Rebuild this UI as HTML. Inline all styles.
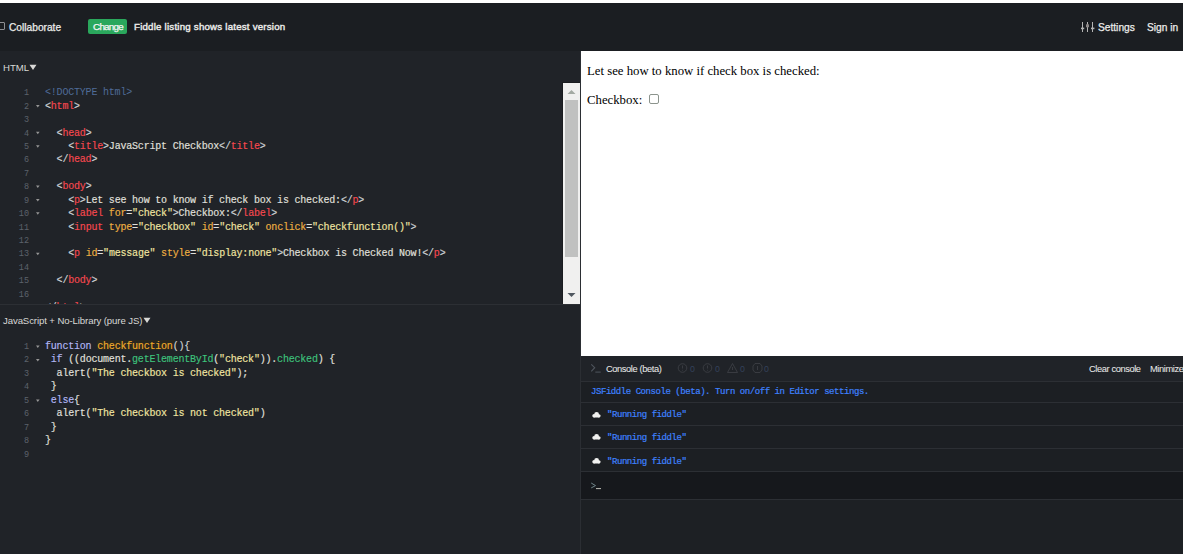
<!DOCTYPE html>
<html><head><meta charset="utf-8">
<style>
*{margin:0;padding:0;box-sizing:border-box}
html,body{width:1183px;height:554px;overflow:hidden;background:#1b1e22;font-family:"Liberation Sans",sans-serif}
.a{position:absolute}
#topw{left:0;top:0;width:1183px;height:3px;background:#fff}
#topd{left:0;top:3px;width:1183px;height:1px;background:#1b1e22}
#hdr{left:0;top:4px;width:1183px;height:47px;background:#1b1e22}
.ht{color:#ececea;font-size:10px;line-height:12px;white-space:pre;-webkit-text-stroke:0.25px currentColor}
#left{left:0;top:51px;width:580px;height:503px;background:#202328}
#split{left:580px;top:51px;width:1px;height:503px;background:#2b2e33}
#prev{left:581px;top:51px;width:602px;height:305px;background:#fff}
#cons{left:581px;top:356px;width:602px;height:198px;background:#1d2024}
.code{font-family:"Liberation Mono",monospace;font-size:10px;letter-spacing:-0.2px;white-space:pre;line-height:13.43px;color:#e0e0de;-webkit-text-stroke:0.15px currentColor}
.ln{font-family:"Liberation Mono",monospace;font-size:8.5px;color:#5c626b;text-align:right;width:29px;line-height:13.43px;white-space:pre}
.fd{color:#8b8d90;font-size:7px;line-height:13.43px}
.tg{color:#f7484f}
.br{color:#cfd3d6}
.at{color:#efb042}
.st{color:#f2e6a2}
.dt{color:#4f6b98;-webkit-text-stroke:0}
.kw{color:#b3b8f6}
.fn{color:#f0ad2a}
.pr{color:#3ec27c}
.js{color:#d8d8d6}
.sep{height:1px;background:#2c2f34}
.cl{font-family:"Liberation Mono",monospace;font-size:9px;letter-spacing:-0.44px;color:#3f82ff;white-space:pre;-webkit-text-stroke:0.2px currentColor}
</style></head><body>
<div class="a" id="topw"></div>
<div class="a" id="topd"></div>
<div class="a" id="hdr">
  <div class="a" style="left:-4px;top:18px;width:9px;height:8px;border:1px solid #8e9094;border-radius:1px"></div>
  <div class="a ht" style="left:9px;top:17.8px;font-size:10.2px">Collaborate</div>
  <div class="a" style="left:88px;top:15px;width:39px;height:15px;background:#2aa75c;border-radius:2px"></div>
  <div class="a ht" style="left:93px;top:16.5px;font-size:9.8px;letter-spacing:-0.7px;color:#f6f6f6">Change</div>
  <div class="a ht" style="left:134px;top:16.5px;font-size:9.7px;letter-spacing:0.22px;-webkit-text-stroke:0.4px currentColor">Fiddle listing shows latest version</div>
  <svg class="a" style="left:1081px;top:18px" width="14" height="10" viewBox="0 0 14 10">
    <g fill="#b4b4b4"><rect x="1" y="0" width="1" height="10"/><rect x="6" y="0" width="1" height="10"/><rect x="11" y="0" width="1" height="10"/>
    <rect x="-0.2" y="5.6" width="3.4" height="1.6"/><rect x="10" y="5.6" width="3.4" height="1.6"/></g>
    <rect x="5" y="2" width="3" height="3.4" rx="1.2" fill="#8f8a8a"/>
  </svg>
  <div class="a ht" style="left:1098px;top:17.8px;font-size:10.2px">Settings</div>
  <div class="a ht" style="left:1147px;top:17.8px;font-size:10.2px">Sign in</div>
</div>

<div class="a" id="left">
  <div class="a ht" style="left:3px;top:11px;font-size:9.6px;color:#d8d8d6;-webkit-text-stroke:0">HTML</div><svg class="a" style="left:29px;top:13px" width="9" height="7"><polygon points="0.5,0.8 7.5,0.8 4,6" fill="#d8d8d6"/></svg>
  <!-- html line numbers -->
  <div class="a ln" style="left:0;top:36.2px">1
2
3
4
5
6
7
8
9
10
11
12
13
14
15
16
17</div>
  
  <div class="a code" style="left:45px;top:35.2px"><span class="dt">&lt;!DOCTYPE html&gt;</span>
<span class="br">&lt;</span><span class="tg">html</span><span class="br">&gt;</span>

  <span class="br">&lt;</span><span class="tg">head</span><span class="br">&gt;</span>
    <span class="br">&lt;</span><span class="tg">title</span><span class="br">&gt;</span>JavaScript Checkbox<span class="br">&lt;/</span><span class="tg">title</span><span class="br">&gt;</span>
  <span class="br">&lt;/</span><span class="tg">head</span><span class="br">&gt;</span>

  <span class="br">&lt;</span><span class="tg">body</span><span class="br">&gt;</span>
    <span class="br">&lt;</span><span class="tg">p</span><span class="br">&gt;</span>Let see how to know if check box is checked:<span class="br">&lt;/</span><span class="tg">p</span><span class="br">&gt;</span>
    <span class="br">&lt;</span><span class="tg">label</span> <span class="at">for</span>=<span class="st">"check"</span><span class="br">&gt;</span>Checkbox:<span class="br">&lt;/</span><span class="tg">label</span><span class="br">&gt;</span>
    <span class="br">&lt;</span><span class="tg">input</span> <span class="at">type</span>=<span class="st">"checkbox"</span> <span class="at">id</span>=<span class="st">"check"</span> <span class="at">onclick</span>=<span class="st">"checkfunction()"</span><span class="br">&gt;</span>

    <span class="br">&lt;</span><span class="tg">p</span> <span class="at">id</span>=<span class="st">"message"</span> <span class="at">style</span>=<span class="st">"display:none"</span><span class="br">&gt;</span>Checkbox is Checked Now!<span class="br">&lt;/</span><span class="tg">p</span><span class="br">&gt;</span>

  <span class="br">&lt;/</span><span class="tg">body</span><span class="br">&gt;</span>

<span class="br">&lt;/</span><span class="tg">html</span><span class="br">&gt;</span></div>
  <!-- cover below html editor -->
  <div class="a" style="left:0;top:253px;width:580px;height:250px;background:#202328"></div>
  <div class="a sep" style="left:0;top:253px;width:580px"></div>
  <!-- scrollbar -->
  <div class="a" style="left:562px;top:31px;width:18px;height:222px;background:#1a1c1f"></div>
  <div class="a" style="left:563px;top:32px;width:17px;height:221px;background:#f0f0ef"></div>
  <div class="a" style="left:565px;top:49px;width:13px;height:157px;background:#c0c1c0"></div>
  <svg class="a" style="left:567px;top:38px" width="9" height="6"><polygon points="0.5,5 4.5,1 8.5,5" fill="#a3aaa3"/></svg>
  <svg class="a" style="left:567px;top:241px" width="9" height="6"><polygon points="0.5,1 4.5,5 8.5,1" fill="#505860"/></svg>

  <div class="a ht" style="left:3px;top:264px;font-size:9.6px;letter-spacing:-0.1px;color:#d8d8d6;-webkit-text-stroke:0">JavaScript + No-Library (pure JS)</div><svg class="a" style="left:143px;top:266px" width="9" height="7"><polygon points="0.5,0.8 7.5,0.8 4,6" fill="#d8d8d6"/></svg>
  <div class="a ln" style="left:0;top:289.8px;line-height:13.5px">1
2
3
4
5
6
7
8
9</div>
  
  <div class="a" style="left:97px;top:289.2px;width:79px;height:9.6px;background:#29281f"></div>
  <div class="a code" style="left:45px;top:288.8px;line-height:13.5px"><span class="kw">function</span> <span class="fn">checkfunction</span><span class="br">(){</span>
 <span class="kw">if</span> ((document.<span class="pr">getElementById</span>(<span class="st">"check"</span>)).<span class="pr">checked</span>) {
  alert(<span class="st">"The checkbox is checked"</span>);
 }
 <span class="kw">else</span>{
  alert(<span class="st">"The checkbox is not checked"</span>)
 }
}
</div>
<svg class="a" style="left:0;top:0" width="45" height="503" fill="#969696"><polygon points="36,53.93 39.6,53.93 37.8,56.43"/><polygon points="36,80.79 39.6,80.79 37.8,83.29"/><polygon points="36,94.22 39.6,94.22 37.8,96.72"/><polygon points="36,134.51 39.6,134.51 37.8,137.01"/><polygon points="36,147.94 39.6,147.94 37.8,150.44"/><polygon points="36,161.37 39.6,161.37 37.8,163.87"/><polygon points="36,201.66 39.6,201.66 37.8,204.16"/><polygon points="36,294.50 39.6,294.50 37.8,297.00"/><polygon points="36,308.00 39.6,308.00 37.8,310.50"/><polygon points="36,348.50 39.6,348.50 37.8,351.00"/></svg>
</div>
<div class="a" id="split"></div>
<div class="a" id="prev">
  <div class="a" style="left:6px;top:12.5px;font-family:'Liberation Serif',serif;font-size:12.75px;color:#000;white-space:pre">Let see how to know if check box is checked:</div>
  <div class="a" style="left:6px;top:42px;font-family:'Liberation Serif',serif;font-size:12.75px;color:#000;white-space:pre">Checkbox:</div>
  <div class="a" style="left:68px;top:43px;width:10px;height:10px;border:1px solid #8c948d;border-radius:2px;background:#fff"></div>
</div>
<div class="a" id="cons">
  <div class="a" style="left:0;top:0;width:602px;height:25px;background:#202328"></div>
  <div class="a sep" style="left:0;top:25px;width:602px"></div>
  <div class="a" style="left:0;top:26px;width:602px;height:20px;background:#1c1f23"></div>
  <div class="a sep" style="left:0;top:46px;width:602px"></div>
  <div class="a" style="left:0;top:47px;width:602px;height:22px;background:#1c1f23"></div>
  <div class="a sep" style="left:0;top:69px;width:602px"></div>
  <div class="a" style="left:0;top:70px;width:602px;height:22px;background:#1c1f23"></div>
  <div class="a sep" style="left:0;top:92px;width:602px"></div>
  <div class="a" style="left:0;top:93px;width:602px;height:22px;background:#1c1f23"></div>
  <div class="a sep" style="left:0;top:115px;width:602px"></div>
  <div class="a" style="left:0;top:116px;width:602px;height:27px;background:#16181c"></div>
  <div class="a sep" style="left:0;top:143px;width:602px"></div>

  <svg class="a" style="left:0;top:0" width="30" height="25"><polyline points="10.3,8.3 13.7,11.7 10.3,15.4" fill="none" stroke="#4f555d" stroke-width="1.1"/><rect x="14.3" y="15.6" width="5.4" height="1" fill="#4f555d"/></svg>
  <div class="a ht" style="left:25px;top:7px;font-size:9.3px;letter-spacing:-0.4px;color:#e6e6e6;-webkit-text-stroke:0.05px currentColor">Console (beta)</div>
  <svg class="a" style="left:96px;top:6px" width="95" height="12" viewBox="0 0 95 12" fill="none" stroke="#3d4046" stroke-width="0.85">
    <circle cx="5.5" cy="6" r="4.3"/><line x1="5.5" y1="3.5" x2="5.5" y2="6.5"/><line x1="5.5" y1="7.8" x2="5.5" y2="8.6"/>
    <circle cx="30.5" cy="6" r="4.3"/><line x1="30.5" y1="3.5" x2="30.5" y2="6.5"/><line x1="30.5" y1="7.8" x2="30.5" y2="8.6"/>
    <polygon points="55.5,1.5 60.5,10.5 50.5,10.5"/><line x1="55.5" y1="5" x2="55.5" y2="8"/>
    <polygon points="78,1.5 83,1.5 85,4 85,8 83,10.5 78,10.5 76,8 76,4"/><line x1="80.5" y1="4" x2="80.5" y2="8"/>
  </svg>
  <div class="a ht" style="left:109px;top:6.5px;font-size:8.8px;color:#34415a;-webkit-text-stroke:0">0</div>
  <div class="a ht" style="left:134px;top:6.5px;font-size:8.8px;color:#34415a;-webkit-text-stroke:0">0</div>
  <div class="a ht" style="left:159px;top:6.5px;font-size:8.8px;color:#34415a;-webkit-text-stroke:0">0</div>
  <div class="a ht" style="left:183px;top:6.5px;font-size:8.8px;color:#34415a;-webkit-text-stroke:0">0</div>
  <div class="a ht" style="left:508px;top:7px;font-size:9.3px;letter-spacing:-0.4px;color:#e6e6e6;-webkit-text-stroke:0.05px currentColor">Clear console</div>
  <div class="a ht" style="left:569px;top:7px;font-size:9.3px;letter-spacing:-0.4px;color:#e6e6e6;-webkit-text-stroke:0.05px currentColor">Minimize</div>

  <div class="a cl" style="left:10px;top:31px">JSFiddle Console (beta). Turn on/off in Editor settings.</div>
  <div class="a cl" style="left:26px;top:54px">"Running fiddle"</div>
  <div class="a cl" style="left:26px;top:77px">"Running fiddle"</div>
  <div class="a cl" style="left:26px;top:101px">"Running fiddle"</div>
  <svg class="a" style="left:9.5px;top:54.5px" width="10" height="7"><g fill="#f2f2f0"><circle cx="5.6" cy="3.5" r="2.4"/><circle cx="3" cy="4.7" r="1.7"/><circle cx="8" cy="4.8" r="1.6"/><rect x="2.6" y="4.6" width="5.8" height="1.9"/></g></svg>
  <svg class="a" style="left:9.5px;top:77.3px" width="10" height="7"><g fill="#f2f2f0"><circle cx="5.6" cy="3.5" r="2.4"/><circle cx="3" cy="4.7" r="1.7"/><circle cx="8" cy="4.8" r="1.6"/><rect x="2.6" y="4.6" width="5.8" height="1.9"/></g></svg>
  <svg class="a" style="left:9.5px;top:101px" width="10" height="7"><g fill="#f2f2f0"><circle cx="5.6" cy="3.5" r="2.4"/><circle cx="3" cy="4.7" r="1.7"/><circle cx="8" cy="4.8" r="1.6"/><rect x="2.6" y="4.6" width="5.8" height="1.9"/></g></svg>
  <svg class="a" style="left:0;top:116px" width="30" height="27"><polyline points="10.2,11 14.5,13.6 10.2,15.9" fill="none" stroke="#6f858a" stroke-width="1"/><rect x="15" y="16.1" width="5" height="1" fill="#bdbdb5"/></svg>
</div>
</body></html>
